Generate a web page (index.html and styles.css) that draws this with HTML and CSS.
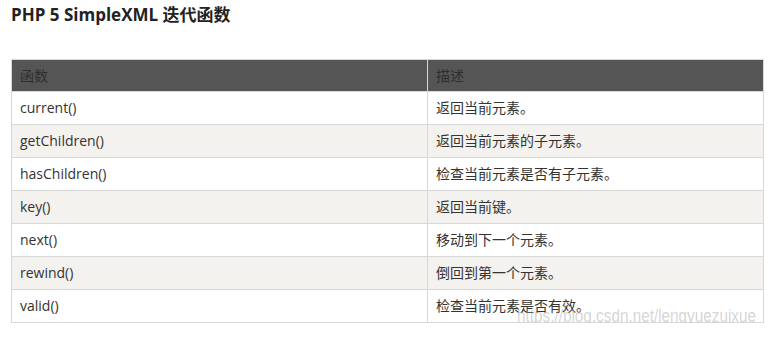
FILE: index.html
```html
<!DOCTYPE html>
<html lang="zh">
<head>
<meta charset="utf-8">
<link rel="stylesheet" href="styles.css">
</head>
<body>
<div class="page">
  <h3 class="title">PHP 5 SimpleXML 迭代函数</h3>
  <table class="ref">
    <thead>
      <tr><th class="c1">函数</th><th>描述</th></tr>
    </thead>
    <tbody>
      <tr><td>current()</td><td>返回当前元素。</td></tr>
      <tr><td>getChildren()</td><td>返回当前元素的子元素。</td></tr>
      <tr><td>hasChildren()</td><td>检查当前元素是否有子元素。</td></tr>
      <tr><td>key()</td><td>返回当前键。</td></tr>
      <tr><td>next()</td><td>移动到下一个元素。</td></tr>
      <tr><td>rewind()</td><td>倒回到第一个元素。</td></tr>
      <tr><td>valid()</td><td>检查当前元素是否有效。</td></tr>
    </tbody>
  </table>
  <div class="watermark">https://blog.csdn.net/lengyuezuixue</div>
</div>
</body>
</html>
```

FILE: styles.css
```css
html, body {
  margin: 0;
  padding: 0;
  background: #fff;
}
.page {
  position: relative;
  padding: 0 11px;
  font-family: "Open Sans", "Noto Sans CJK SC", sans-serif;
  color: #333;
}
.title {
  margin: 0;
  padding-top: 4px;
  height: 59px;
  box-sizing: border-box;
  font-size: 17px;
  font-weight: 700;
  line-height: 22px;
  color: #222;
}
.ref {
  width: 753px;
  border-collapse: collapse;
  font-size: 14px;
  table-layout: fixed;
}
.ref th, .ref td {
  border: 1px solid #d8d8d8;
  text-align: left;
  padding: 0 8px;
  height: 32px;
  font-weight: 400;
  line-height: 18px;
}
.ref th {
  background: #555555;
  color: #2e2e2e;
  height: 31px;
}
.ref .c1 {
  width: 399px;
}
.ref tbody tr:nth-child(even) td {
  background: #f3f2ef;
}
.ref td {
  color: #333;
}
.watermark {
  position: absolute;
  left: 517px;
  top: 306px;
  font-family: "Liberation Sans", Arial, sans-serif;
  font-size: 18px;
  line-height: 20px;
  color: rgba(160, 160, 160, 0.45);
  white-space: nowrap;
  transform: scaleX(0.85);
  transform-origin: left top;
  pointer-events: none;
}
```
